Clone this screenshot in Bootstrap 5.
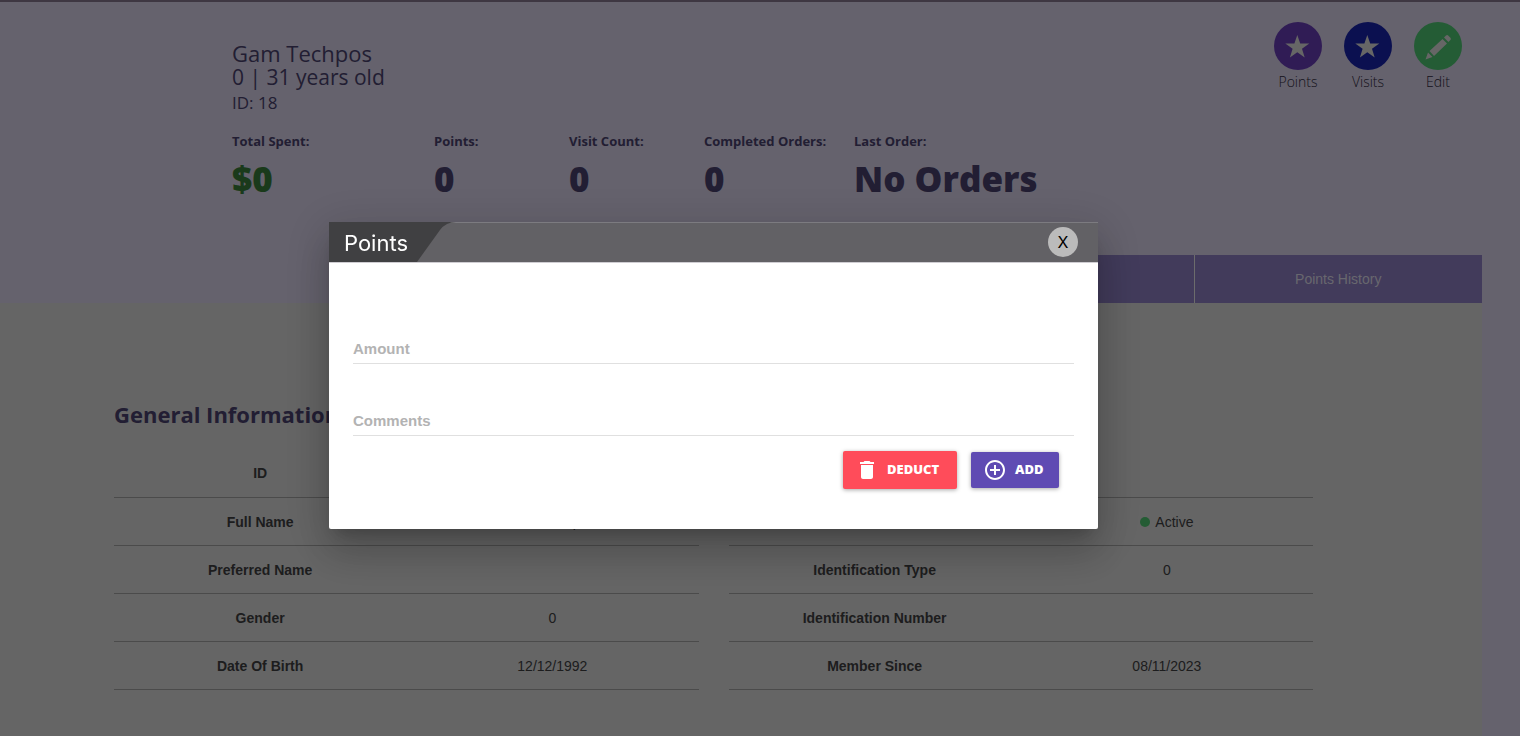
<!DOCTYPE html>
<html lang="en">
<head>
<meta charset="utf-8">
<meta name="viewport" content="width=device-width, initial-scale=1">
<title>Customer profile</title>
<link rel="stylesheet" href="https://cdn.jsdelivr.net/npm/bootstrap@5.3.0/dist/css/bootstrap.min.css">
<style>
  body {
    font-family: "Liberation Sans", Arial, sans-serif;
    font-size: 14px;
    background: #cac4da;
    border-top: 2px solid #7c6e84;
    color: #3a3a3c;
  }
  .profile-text, .section-title, .act-label, .modal-btn { font-family: "Open Sans", sans-serif; }
  .profile-head { min-height: 301px; }
  .profile-text { padding: 39px 0 0 232px; color: #443c66; }
  .name-line { font-size: 22px; line-height: 24px; }
  .age-line { font-size: 21px; line-height: 24px; }
  .id-line { font-size: 17px; line-height: 28px; }
  .stat-grid { display: grid; grid-template-columns: 202px 135px 135px 150px auto; margin-top: 14px; }
  .stat-label { font-size: 13px; font-weight: 700; line-height: 20px; }
  .stat-value { font-size: 35px; font-weight: 800; line-height: 56px; }
  .stat-money { color: #347436; }
  .actions { padding: 20px 47px 0 0; }
  .act { width: 70px; color: #2a2638; text-decoration: none; }
  .act-dot { width: 48px; height: 48px; }
  .act-label { font-size: 14px; font-weight: 300; line-height: 24px; }
  .profile-tabs { width: 1153px; max-width: 78%; height: 48px; margin: -48px 38px 0 auto; }
  .profile-tabs button { flex: 1 1 0; border: 0; background: #8476b6; color: #d0cedc; }
  .profile-tabs button + button { border-left: 1px solid #d8d8d8; }
  .sheet { margin-right: 38px; padding: 95px 169px 0 114px; background: #cacaca; }
  .section-title { font-size: 22px; font-weight: 700; line-height: 32px; color: #443c66; margin: 0 0 19px; }
  .info-row { display: grid; grid-template-columns: 1fr 1fr; gap: 30px; }
  .info-tbl { width: 100%; table-layout: fixed; text-align: center; }
  .info-tbl th, .info-tbl td { height: 48px; border-bottom: 1px solid #969696; padding: 2px 0 0; vertical-align: middle; text-align: center; }
  .status-dot { width: 10px; height: 10px; background: #48b868; margin-right: 5px; }
  .veil { background: rgba(0,0,0,.5); }
  .dialog-wrap { padding: 222px 93px 0 0; }
  .dialog-box { width: 769px; background: #fff; border-radius: 0 0 2px 2px; overflow: hidden; }
  .dialog-shadow { border-radius: 2px; box-shadow: 0 11px 15px -7px rgba(0,0,0,.2), 0 24px 38px 3px rgba(0,0,0,.14), 0 9px 46px 8px rgba(0,0,0,.12); }
  .dialog-head { height: 41px; background: #626165; border-top: 1px solid #7c7b80; border-bottom: 1px solid #cfcdd2; }
  .dialog-title { font-family: Inter, sans-serif; font-size: 22px; line-height: 40px; font-weight: 400; color: #fff; margin: 0; padding-left: 15px; width: 126px; }
  .head-shape { left: 0; top: -1px; }
  .close-dot { width: 30px; height: 30px; border: 0; background: #bbb; color: #000; font-family: Inter, sans-serif; font-size: 16px; margin: 0 20px 2px 0; }
  .dialog-form { padding: 69px 24px 40px; }
  .line-input { display: block; width: 100%; height: 32px; border: 0; border-bottom: 1px solid #e0e0e0; font-size: 15px; font-weight: 700; padding: 1px 0 0; outline: 0; color: #444; background: transparent; }
  .line-input::placeholder { color: #b3b3b3; opacity: 1; }
  .line-input + .line-input { margin-top: 40px; }
  .btn-line { gap: 14px; padding: 15px 15px 0 0; }
  .modal-btn { border: 0; border-radius: 2px; color: #fff; font-size: 13px; font-weight: 800; padding: 0 0 0 12px; box-shadow: 0 1px 4px rgba(0,0,0,.35); }
  .btn-deduct { width: 114px; height: 38px; background: #ff4c5a; }
  .btn-add { width: 88px; height: 36px; background: #5f4bb3; }
</style>
</head>
<body class="d-flex flex-column vh-100 overflow-hidden">
<header class="profile-head d-flex justify-content-between">
  <div class="profile-text">
    <div class="name-line">Gam Techpos</div>
    <div class="age-line">0 | 31 years old</div>
    <div class="id-line">ID: 18</div>
    <div class="stat-grid">
      <div><div class="stat-label">Total Spent:</div><div class="stat-value stat-money">$0</div></div>
      <div><div class="stat-label">Points:</div><div class="stat-value">0</div></div>
      <div><div class="stat-label">Visit Count:</div><div class="stat-value">0</div></div>
      <div><div class="stat-label">Completed Orders:</div><div class="stat-value">0</div></div>
      <div><div class="stat-label">Last Order:</div><div class="stat-value">No Orders</div></div>
    </div>
  </div>
  <nav class="actions d-flex align-items-start">
    <a href="#" class="act d-flex flex-column align-items-center">
      <svg class="act-dot" viewBox="0 0 48 48"><circle cx="24" cy="24" r="24" fill="#6038aa"/><path d="M23.300 13l2.900 8.400h9.100l-7.300 5.400 2.700 8.700-7.400-5.200-7.400 5.200 2.700-8.700-7.300-5.400h9.100z" fill="#ccc"/></svg>
      <span class="act-label">Points</span>
    </a>
    <a href="#" class="act d-flex flex-column align-items-center">
      <svg class="act-dot" viewBox="0 0 48 48"><circle cx="24" cy="24" r="24" fill="#1620a0"/><path d="M23.300 13l2.900 8.400h9.100l-7.300 5.400 2.700 8.700-7.400-5.200-7.400 5.200 2.700-8.700-7.300-5.400h9.100z" fill="#ccc"/></svg>
      <span class="act-label">Visits</span>
    </a>
    <a href="#" class="act d-flex flex-column align-items-center">
      <svg class="act-dot" viewBox="0 0 48 48"><circle cx="24" cy="24" r="24" fill="#48b86a"/><path d="M11.500 37.500L14 30.500l4.500 4.500zM15.500 29L28.500 17l4.500 4.500L20 34zM30 15.500l2-2q1.200-1 2.400.2l2 2q1.100 1.200 0 2.300l-2 2z" fill="#ccc"/></svg>
      <span class="act-label">Edit</span>
    </a>
  </nav>
</header>
<div class="profile-tabs d-flex flex-shrink-0">
  <button type="button" aria-label="Profile"></button>
  <button type="button" aria-label="Orders"></button>
  <button type="button" aria-label="Visits"></button>
  <button type="button">Points History</button>
</div>
<main class="sheet flex-grow-1">
  <h2 class="section-title">General Information</h2>
  <div class="info-row">
    <table class="info-tbl">
      <tr><th scope="row">ID</th><td>18</td></tr>
      <tr><th scope="row">Full Name</th><td>Gam Techpos</td></tr>
      <tr><th scope="row">Preferred Name</th><td></td></tr>
      <tr><th scope="row">Gender</th><td>0</td></tr>
      <tr><th scope="row">Date Of Birth</th><td>12/12/1992</td></tr>
    </table>
    <table class="info-tbl">
      <tr><th></th><td></td></tr>
      <tr><th scope="row">Status</th><td><span class="d-flex align-items-center justify-content-center"><span class="status-dot rounded-circle"></span>Active</span></td></tr>
      <tr><th scope="row">Identification Type</th><td>0</td></tr>
      <tr><th scope="row">Identification Number</th><td></td></tr>
      <tr><th scope="row">Member Since</th><td>08/11/2023</td></tr>
    </table>
  </div>
</main>

<div class="veil position-fixed top-0 start-0 w-100 h-100"></div>
<div class="dialog-wrap position-fixed top-0 start-0 w-100 h-100 d-flex justify-content-center align-items-start">
  <div class="dialog-shadow" role="dialog" aria-labelledby="dlgTitle">
    <div class="dialog-box">
      <div class="dialog-head d-flex justify-content-between align-items-center position-relative">
        <svg class="head-shape position-absolute" width="127" height="41" viewBox="0 0 127 41"><path d="M0 0h127q-10 0-16 8L88 40H0z" fill="#404042"/></svg>
        <h1 class="dialog-title position-relative" id="dlgTitle">Points</h1>
        <button type="button" class="close-dot rounded-circle d-flex align-items-center justify-content-center p-0">X</button>
      </div>
      <form class="dialog-form">
        <input class="line-input" type="text" aria-label="Amount" placeholder="Amount">
        <input class="line-input" type="text" aria-label="Comments" placeholder="Comments">
        <div class="btn-line d-flex justify-content-end align-items-center">
          <button type="button" class="modal-btn btn-deduct d-flex align-items-center gap-2">
            <svg width="24" height="24" viewBox="0 0 24 24" fill="#fff"><path d="M6 19c0 1.100.9 2 2 2h8c1.100 0 2-.9 2-2V7H6v12zM19 4h-3.500l-1-1h-5l-1 1H5v2h14V4z"/></svg>
            <span>DEDUCT</span>
          </button>
          <button type="button" class="modal-btn btn-add d-flex align-items-center gap-2">
            <svg width="24" height="24" viewBox="0 0 24 24" fill="#fff"><path d="M13 7h-2v4H7v2h4v4h2v-4h4v-2h-4V7zm-1-5C6.480 2 2 6.480 2 12s4.480 10 10 10 10-4.480 10-10S17.520 2 12 2zm0 18c-4.410 0-8-3.590-8-8s3.590-8 8-8 8 3.590 8 8-3.590 8-8 8z"/></svg>
            <span>ADD</span>
          </button>
        </div>
      </form>
    </div>
  </div>
</div>
<script src="https://cdn.jsdelivr.net/npm/bootstrap@5.3.0/dist/js/bootstrap.bundle.min.js"></script>
</body>
</html>
